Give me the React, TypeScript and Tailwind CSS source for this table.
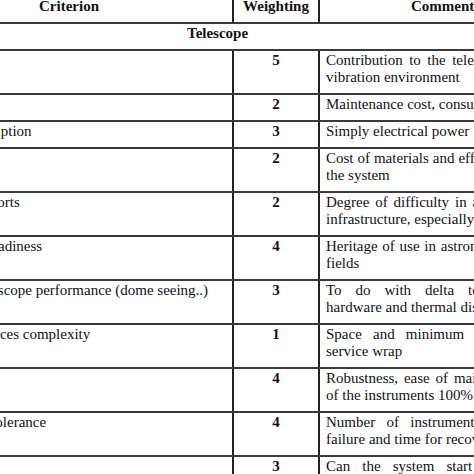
const rows = [
  { criterion: "Vibrations", weight: 5, comment: "Contribution to the telescope and pier vibration environment" },
  { criterion: "Maintenance", weight: 2, comment: "Maintenance cost, consumables" },
  { criterion: "Power consumption", weight: 3, comment: "Simply electrical power" },
  { criterion: "Cost", weight: 2, comment: "Cost of materials and effort to assemble the system" },
  { criterion: "Interface supports", weight: 2, comment: "Degree of difficulty in adapting to the infrastructure, especially the dome" },
  { criterion: "Technology readiness", weight: 4, comment: "Heritage of use in astronomy and other fields" },
  { criterion: "Impact on telescope performance (dome seeing..)", weight: 3, comment: "To do with delta temperature of hardware and thermal dissipation" },
  { criterion: "Required services complexity", weight: 1, comment: "Space and minimum length of the service wrap" },
  { criterion: "Reliability", weight: 4, comment: "Robustness, ease of maintenance, duty of the instruments 100% of the time" },
  { criterion: "System fault tolerance", weight: 4, comment: "Number of instruments affected by failure and time for recovery" },
  { criterion: "Cold start", weight: 3, comment: "Can the system start automatically when power returns" },
]

export default function App() {
  return (
    <div className="w-[474px] h-[474px] overflow-hidden bg-white text-[#111] font-['Liberation_Serif','Times_New_Roman',serif] text-[15px] leading-[17px]">
      <div className="ml-[-94px] mt-[-5px] w-[665px] border-t-2 border-[#333]">
        {/* header */}
        <div className="grid grid-cols-[326px_86px_253px] border-b-2 border-[#3a3a3a] font-bold">
          <div className="pt-[1px] pb-[7px] text-center">Criterion</div>
          <div className="border-l-2 border-[#222] pt-[1px] pb-[7px] text-center">Weighting</div>
          <div className="border-l-2 border-[#222] pt-[1px] pb-[7px] text-center">Comments</div>
        </div>

        <div className="border-b-2 border-[#3a3a3a] pt-[1px] pb-[7px] pl-[281px] font-bold">Telescope</div>

        {rows.map((r) => (
          <div key={r.criterion} className="grid grid-cols-[326px_86px_253px] border-b-2 border-[#3a3a3a]">
            <div className="pt-[1px] pb-[7px] pl-[6px] pr-[4px]">{r.criterion}</div>
            <div className="border-l-2 border-[#222] pt-[1px] pb-[7px] text-center font-bold">{r.weight}</div>
            <div className="border-l-2 border-[#222] pt-[1px] pb-[7px] pl-[6px] pr-[5px] text-justify">{r.comment}</div>
          </div>
        ))}
      </div>
    </div>
  )
}
